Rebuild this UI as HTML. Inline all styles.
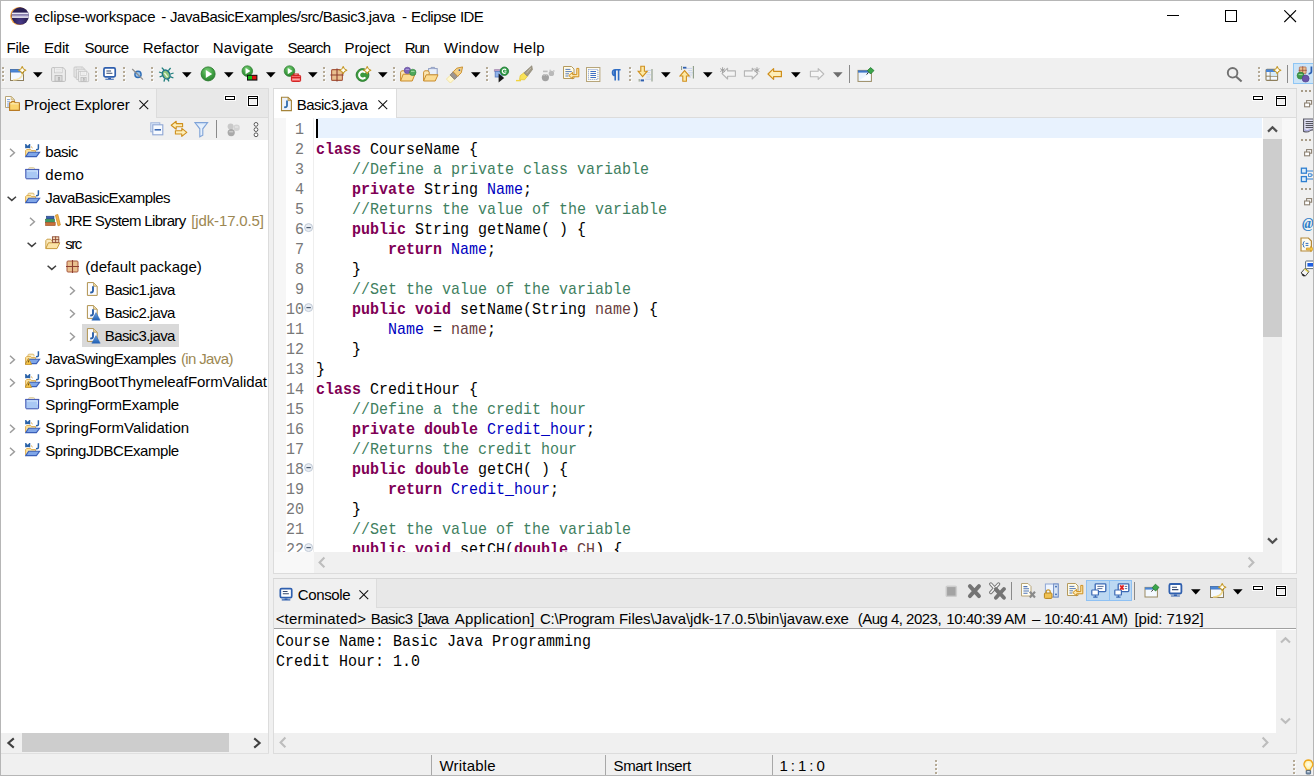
<!DOCTYPE html>
<html><head><meta charset="utf-8"><title>Eclipse IDE</title>
<style>
html,body{margin:0;padding:0;}
body{width:1314px;height:776px;overflow:hidden;background:#f0f0f0;font-family:"Liberation Sans",sans-serif;font-size:15px;color:#000;position:relative;}
.b{position:absolute;display:block;box-sizing:border-box;}
.t{position:absolute;white-space:pre;display:block;}
.m{font-family:"Liberation Mono",monospace;}
.k{color:#7f0055;font-weight:bold;}
.c{color:#3f7f5f;}
.f{color:#0000c0;}
.p{color:#6a3e3e;}
i{font-style:normal;}
.ln{color:#787878;text-align:right;}
.m{font-size:15px;line-height:24px;height:20px;margin-top:1px;transform-origin:0 15px;transform:scaleY(1.06);}
</style></head><body>
<div class="b" style="left:0px;top:0px;width:1314px;height:58px;background:#ffffff;"></div>
<div class="b" style="left:0px;top:0px;width:1314px;height:1px;background:#b6b6b6;"></div>
<div class="b" style="left:0px;top:0px;width:1px;height:776px;background:#b6b6b6;"></div>
<div class="b" style="left:1313px;top:0px;width:1px;height:776px;background:#b6b6b6;"></div>
<div class="b" style="left:0px;top:775px;width:1314px;height:1px;background:#b6b6b6;"></div>
<span class="t" style="left:34.40px;top:6.80px;line-height:20px;letter-spacing:-0.140px;">eclipse-workspace</span>
<span class="t" style="left:161.30px;top:6.80px;line-height:20px;letter-spacing:-0.600px;">-</span>
<span class="t" style="left:170.00px;top:6.80px;line-height:20px;letter-spacing:-0.444px;">JavaBasicExamples/src/Basic3.java</span>
<span class="t" style="left:402.00px;top:6.80px;line-height:20px;letter-spacing:-0.600px;">-</span>
<span class="t" style="left:411.00px;top:6.80px;line-height:20px;letter-spacing:-0.502px;">Eclipse</span>
<span class="t" style="left:460.00px;top:6.80px;line-height:20px;letter-spacing:-0.650px;">IDE</span>
<svg class="b" style="left:1167px;top:8px" width="16" height="16" viewBox="0 0 16 16"><path d="M0 7.5H12" stroke="#000" stroke-width="1"/></svg>
<svg class="b" style="left:1225px;top:10px" width="14" height="14" viewBox="0 0 14 14"><rect x="0.5" y="0.5" width="11" height="11" fill="none" stroke="#000" stroke-width="1"/></svg>
<svg class="b" style="left:1284px;top:10px" width="14" height="14" viewBox="0 0 14 14"><path d="M0.3 0.3L12 12M12 0.3L0.3 12" stroke="#000" stroke-width="1.1"/></svg>
<span class="t" style="left:6.50px;top:37.80px;line-height:20px;letter-spacing:-0.276px;">File</span>
<span class="t" style="left:44.00px;top:37.80px;line-height:20px;letter-spacing:-0.227px;">Edit</span>
<span class="t" style="left:84.50px;top:37.80px;line-height:20px;letter-spacing:-0.597px;">Source</span>
<span class="t" style="left:142.70px;top:37.80px;line-height:20px;letter-spacing:-0.056px;">Refactor</span>
<span class="t" style="left:212.70px;top:37.80px;line-height:20px;letter-spacing:0.206px;">Navigate</span>
<span class="t" style="left:287.50px;top:37.80px;line-height:20px;letter-spacing:-0.797px;">Search</span>
<span class="t" style="left:344.60px;top:37.80px;line-height:20px;letter-spacing:-0.153px;">Project</span>
<span class="t" style="left:404.70px;top:37.80px;line-height:20px;letter-spacing:-1.137px;">Run</span>
<span class="t" style="left:444.00px;top:37.80px;line-height:20px;letter-spacing:0.297px;">Window</span>
<span class="t" style="left:513.00px;top:37.80px;line-height:20px;letter-spacing:0.231px;">Help</span>
<div class="b" style="left:1px;top:88px;width:268px;height:666px;background:#ffffff;"></div>
<div class="b" style="left:1px;top:88px;width:268px;height:52px;background:#f0f0f0;"></div>
<div class="b" style="left:156px;top:88px;width:113px;height:30px;background:#e8e8e8;border-left:1px solid #dcdcdc;border-bottom:1px solid #dcdcdc;border-top:1px solid #dcdcdc;"></div>
<div class="b" style="left:268px;top:88px;width:1px;height:666px;background:#dcdcdc;"></div>
<span class="t" style="left:24.10px;top:94.80px;line-height:20px;letter-spacing:-0.067px;">Project Explorer</span>
<svg class="b" style="left:139px;top:99.8px" width="11" height="11" viewBox="0 0 11 11"><path d="M0.4 0.4L9.2 9.2M9.2 0.4L0.4 9.2" stroke="#111" stroke-width="1.05" fill="none"/></svg>
<div class="b" style="left:225px;top:96px;width:10px;height:4px;background:#ffffff;border:1px solid #000;box-shadow:0 0 0 1px rgba(255,255,255,0.85);"></div>
<div class="b" style="left:248px;top:96px;width:10px;height:10px;background:#f0f0f0;border:1px solid #000;box-shadow:0 0 0 1px rgba(255,255,255,0.85), inset 0 0 0 1px rgba(255,255,255,0.7);"></div>
<div class="b" style="left:249px;top:97px;width:8px;height:1px;background:#ffffff;"></div>
<div class="b" style="left:249px;top:98px;width:8px;height:1px;background:#000000;"></div>
<div class="b" style="left:1px;top:733px;width:267px;height:20px;background:#f0f0f0;"></div>
<div class="b" style="left:22px;top:733px;width:207px;height:19px;background:#cdcdcd;"></div>
<div class="b" style="left:1px;top:753px;width:268px;height:1px;background:#e0e0e0;"></div>
<svg class="b" style="left:5px;top:735.5px" width="12" height="14" viewBox="0 0 12 14"><path d="M8.8 2.4L3.4 7L8.8 11.6" stroke="#404040" stroke-width="2.1" fill="none"/></svg>
<svg class="b" style="left:250.5px;top:735.5px" width="12" height="14" viewBox="0 0 12 14"><path d="M3.2 2.4L8.6 7L3.2 11.6" stroke="#404040" stroke-width="2.1" fill="none"/></svg>
<div class="b" style="left:273px;top:88px;width:1024px;height:486px;background:#ffffff;border:1px solid #dcdcdc;"></div>
<div class="b" style="left:396px;top:89px;width:900px;height:29px;background:#f0f0f0;border-left:1px solid #dcdcdc;border-bottom:1px solid #dcdcdc;"></div>
<span class="t" style="left:296.80px;top:94.80px;line-height:20px;letter-spacing:-0.566px;">Basic3.java</span>
<svg class="b" style="left:378.2px;top:99.8px" width="11" height="11" viewBox="0 0 11 11"><path d="M0.4 0.4L9.2 9.2M9.2 0.4L0.4 9.2" stroke="#111" stroke-width="1.05" fill="none"/></svg>
<div class="b" style="left:1253px;top:96px;width:10px;height:4px;background:#ffffff;border:1px solid #000;box-shadow:0 0 0 1px rgba(255,255,255,0.85);"></div>
<div class="b" style="left:1276px;top:96px;width:10px;height:10px;background:#f0f0f0;border:1px solid #000;box-shadow:0 0 0 1px rgba(255,255,255,0.85), inset 0 0 0 1px rgba(255,255,255,0.7);"></div>
<div class="b" style="left:1277px;top:97px;width:8px;height:1px;background:#ffffff;"></div>
<div class="b" style="left:1277px;top:98px;width:8px;height:1px;background:#000000;"></div>
<div class="b" style="left:273px;top:578px;width:1024px;height:176px;background:#ffffff;border:1px solid #dcdcdc;"></div>
<div class="b" style="left:274px;top:579px;width:1022px;height:50px;background:#f0f0f0;"></div>
<div class="b" style="left:376px;top:579px;width:920px;height:29px;background:#e8e8e8;border-left:1px solid #dcdcdc;border-bottom:1px solid #dcdcdc;"></div>
<span class="t" style="left:297.80px;top:584.80px;line-height:20px;letter-spacing:-0.382px;">Console</span>
<svg class="b" style="left:359px;top:589.8px" width="11" height="11" viewBox="0 0 11 11"><path d="M0.4 0.4L9.2 9.2M9.2 0.4L0.4 9.2" stroke="#111" stroke-width="1.05" fill="none"/></svg>
<div class="b" style="left:1253px;top:586px;width:10px;height:4px;background:#ffffff;border:1px solid #000;box-shadow:0 0 0 1px rgba(255,255,255,0.85);"></div>
<div class="b" style="left:1276px;top:586px;width:10px;height:10px;background:#f0f0f0;border:1px solid #000;box-shadow:0 0 0 1px rgba(255,255,255,0.85), inset 0 0 0 1px rgba(255,255,255,0.7);"></div>
<div class="b" style="left:1277px;top:587px;width:8px;height:1px;background:#ffffff;"></div>
<div class="b" style="left:1277px;top:588px;width:8px;height:1px;background:#000000;"></div>
<div class="b" style="left:431px;top:755px;width:1px;height:20px;background:#a8a8a8;"></div>
<div class="b" style="left:605px;top:755px;width:1px;height:20px;background:#a8a8a8;"></div>
<div class="b" style="left:772px;top:755px;width:1px;height:20px;background:#a8a8a8;"></div>
<span class="t" style="left:439.40px;top:755.80px;line-height:20px;letter-spacing:0.214px;">Writable</span>
<span class="t" style="left:613.60px;top:755.80px;line-height:20px;letter-spacing:-0.384px;">Smart Insert</span>
<span class="t" style="left:779.40px;top:755.80px;line-height:20px;letter-spacing:-0.574px;">1 : 1 : 0</span>
<svg class="b" style="left:9px;top:6px" width="22" height="20" viewBox="0 0 22 20"><defs><clipPath id="ecl"><circle cx="11" cy="10" r="8.8"/></clipPath><radialGradient id="eg" cx="50%" cy="85%" r="70%"><stop offset="0" stop-color="#4a3a8c"/><stop offset="0.6" stop-color="#2c2255"/></radialGradient></defs>
<circle cx="10.2" cy="10" r="9.1" fill="#f4a340"/><circle cx="11.2" cy="10" r="8.7" fill="url(#eg)"/>
<g clip-path="url(#ecl)"><rect x="3" y="6.6" width="18" height="1.7" fill="#e9e6f4"/><rect x="3" y="8.3" width="18" height="1.9" fill="#9a92be"/><rect x="3" y="10.2" width="18" height="1.7" fill="#ece9f6"/></g></svg>
<svg class="b" style="left:4px;top:95px" width="18" height="17" viewBox="0 0 18 17"><path d="M1.5 1.5H7.4L10.4 4.4V12.5H1.5Z" fill="#fdfdfa" stroke="#b8a578" stroke-width="1"/><path d="M7.2 1.6V4.6H10.2" fill="#e8d9a8" stroke="#c8b078" stroke-width="0.8"/><path d="M3 4.6H6.2M3 6.8H6.2M3 9H5.4M3 11H5" stroke="#7f9fd8" stroke-width="1"/>
<path d="M5.6 15.4V7.8H7L7.8 6.4H10.4L11.2 7.8H15.4V15.4Z" fill="#fbd46e" stroke="#b87a24" stroke-width="1.1" stroke-linejoin="round"/><path d="M6.4 8.8H14.6" stroke="#fdf0c0" stroke-width="1"/></svg>
<svg class="b" style="left:280px;top:96px" width="13" height="16" viewBox="0 0 13 16"><path d="M1.5 1.2H8L11.4 4.6V14.6H1.5Z" fill="#eef3fb" stroke="#a5843a" stroke-width="1.1"/><path d="M8 1.4V4.6H11.2Z" fill="#e6c98a" stroke="#a5843a" stroke-width="0.7"/><path d="M7 4.6V9.4Q7 11.6 4.2 11.2" stroke="#2f6cae" stroke-width="1.8" fill="none"/></svg>
<div class="b" style="left:1px;top:88px;width:268px;height:1px;background:#dcdcdc;"></div>
<div class="b" style="left:273px;top:88px;width:1024px;height:1px;background:#d6d6d6;"></div>
<div class="b" style="left:273px;top:578px;width:1024px;height:1px;background:#d6d6d6;"></div>
<div class="b" style="left:2px;top:67px;width:2px;height:2px;background:#b5aa96;box-shadow:1px 1px 0 rgba(255,255,255,0.8);"></div>
<div class="b" style="left:2px;top:71px;width:2px;height:2px;background:#b5aa96;box-shadow:1px 1px 0 rgba(255,255,255,0.8);"></div>
<div class="b" style="left:2px;top:75px;width:2px;height:2px;background:#b5aa96;box-shadow:1px 1px 0 rgba(255,255,255,0.8);"></div>
<div class="b" style="left:2px;top:79px;width:2px;height:2px;background:#b5aa96;box-shadow:1px 1px 0 rgba(255,255,255,0.8);"></div>
<div class="b" style="left:95px;top:67px;width:2px;height:2px;background:#b5aa96;box-shadow:1px 1px 0 rgba(255,255,255,0.8);"></div>
<div class="b" style="left:95px;top:71px;width:2px;height:2px;background:#b5aa96;box-shadow:1px 1px 0 rgba(255,255,255,0.8);"></div>
<div class="b" style="left:95px;top:75px;width:2px;height:2px;background:#b5aa96;box-shadow:1px 1px 0 rgba(255,255,255,0.8);"></div>
<div class="b" style="left:95px;top:79px;width:2px;height:2px;background:#b5aa96;box-shadow:1px 1px 0 rgba(255,255,255,0.8);"></div>
<div class="b" style="left:123px;top:67px;width:2px;height:2px;background:#b5aa96;box-shadow:1px 1px 0 rgba(255,255,255,0.8);"></div>
<div class="b" style="left:123px;top:71px;width:2px;height:2px;background:#b5aa96;box-shadow:1px 1px 0 rgba(255,255,255,0.8);"></div>
<div class="b" style="left:123px;top:75px;width:2px;height:2px;background:#b5aa96;box-shadow:1px 1px 0 rgba(255,255,255,0.8);"></div>
<div class="b" style="left:123px;top:79px;width:2px;height:2px;background:#b5aa96;box-shadow:1px 1px 0 rgba(255,255,255,0.8);"></div>
<div class="b" style="left:151px;top:67px;width:2px;height:2px;background:#b5aa96;box-shadow:1px 1px 0 rgba(255,255,255,0.8);"></div>
<div class="b" style="left:151px;top:71px;width:2px;height:2px;background:#b5aa96;box-shadow:1px 1px 0 rgba(255,255,255,0.8);"></div>
<div class="b" style="left:151px;top:75px;width:2px;height:2px;background:#b5aa96;box-shadow:1px 1px 0 rgba(255,255,255,0.8);"></div>
<div class="b" style="left:151px;top:79px;width:2px;height:2px;background:#b5aa96;box-shadow:1px 1px 0 rgba(255,255,255,0.8);"></div>
<div class="b" style="left:323px;top:67px;width:2px;height:2px;background:#b5aa96;box-shadow:1px 1px 0 rgba(255,255,255,0.8);"></div>
<div class="b" style="left:323px;top:71px;width:2px;height:2px;background:#b5aa96;box-shadow:1px 1px 0 rgba(255,255,255,0.8);"></div>
<div class="b" style="left:323px;top:75px;width:2px;height:2px;background:#b5aa96;box-shadow:1px 1px 0 rgba(255,255,255,0.8);"></div>
<div class="b" style="left:323px;top:79px;width:2px;height:2px;background:#b5aa96;box-shadow:1px 1px 0 rgba(255,255,255,0.8);"></div>
<div class="b" style="left:393px;top:67px;width:2px;height:2px;background:#b5aa96;box-shadow:1px 1px 0 rgba(255,255,255,0.8);"></div>
<div class="b" style="left:393px;top:71px;width:2px;height:2px;background:#b5aa96;box-shadow:1px 1px 0 rgba(255,255,255,0.8);"></div>
<div class="b" style="left:393px;top:75px;width:2px;height:2px;background:#b5aa96;box-shadow:1px 1px 0 rgba(255,255,255,0.8);"></div>
<div class="b" style="left:393px;top:79px;width:2px;height:2px;background:#b5aa96;box-shadow:1px 1px 0 rgba(255,255,255,0.8);"></div>
<div class="b" style="left:486px;top:67px;width:2px;height:2px;background:#b5aa96;box-shadow:1px 1px 0 rgba(255,255,255,0.8);"></div>
<div class="b" style="left:486px;top:71px;width:2px;height:2px;background:#b5aa96;box-shadow:1px 1px 0 rgba(255,255,255,0.8);"></div>
<div class="b" style="left:486px;top:75px;width:2px;height:2px;background:#b5aa96;box-shadow:1px 1px 0 rgba(255,255,255,0.8);"></div>
<div class="b" style="left:486px;top:79px;width:2px;height:2px;background:#b5aa96;box-shadow:1px 1px 0 rgba(255,255,255,0.8);"></div>
<div class="b" style="left:629px;top:67px;width:2px;height:2px;background:#b5aa96;box-shadow:1px 1px 0 rgba(255,255,255,0.8);"></div>
<div class="b" style="left:629px;top:71px;width:2px;height:2px;background:#b5aa96;box-shadow:1px 1px 0 rgba(255,255,255,0.8);"></div>
<div class="b" style="left:629px;top:75px;width:2px;height:2px;background:#b5aa96;box-shadow:1px 1px 0 rgba(255,255,255,0.8);"></div>
<div class="b" style="left:629px;top:79px;width:2px;height:2px;background:#b5aa96;box-shadow:1px 1px 0 rgba(255,255,255,0.8);"></div>
<div class="b" style="left:1258px;top:67px;width:2px;height:2px;background:#b5aa96;box-shadow:1px 1px 0 rgba(255,255,255,0.8);"></div>
<div class="b" style="left:1258px;top:71px;width:2px;height:2px;background:#b5aa96;box-shadow:1px 1px 0 rgba(255,255,255,0.8);"></div>
<div class="b" style="left:1258px;top:75px;width:2px;height:2px;background:#b5aa96;box-shadow:1px 1px 0 rgba(255,255,255,0.8);"></div>
<div class="b" style="left:1258px;top:79px;width:2px;height:2px;background:#b5aa96;box-shadow:1px 1px 0 rgba(255,255,255,0.8);"></div>
<svg class="b" style="left:10px;top:66px" width="16" height="16" viewBox="0 0 16 16"><rect x="0.5" y="3.5" width="13" height="11" fill="#f4f9ff" stroke="#8e7f5c"/>
<rect x="0.5" y="3.5" width="13" height="2.6" fill="#4a86d6" stroke="#3a6fbd" stroke-width="0.6"/>
<path d="M3 14C9 14 12 11 13 7" stroke="#f5e4ae" stroke-width="1.5" fill="none"/></svg>
<svg class="b" style="left:18px;top:66px" width="9" height="9" viewBox="0 0 9 9"><g transform="translate(0.2,0.2)"><path d="M4 0.4L5.2 2.8L7.6 4L5.2 5.2L4 7.6L2.8 5.2L0.4 4L2.8 2.8Z" fill="#fbe7a6" stroke="#c59a2c" stroke-width="1.1" stroke-linejoin="round"/><path d="M4 2.2V5.8M2.2 4H5.8" stroke="#ffffff" stroke-width="1.2"/></g></svg>
<svg class="b" style="left:33px;top:72px" width="10" height="6" viewBox="0 0 10 6"><path d="M0 0.2H9.6L4.8 5.4Z" fill="#000"/></svg>
<svg class="b" style="left:51px;top:67px" width="16" height="16" viewBox="0 0 16 16"><path d="M1.6 0.6H12L14.4 2.8V13.4Q14.4 14.4 13.4 14.4H1.6Q0.6 14.4 0.6 13.4V1.6Q0.6 0.6 1.6 0.6Z" fill="#ececec" stroke="#bdbdbd"/><rect x="3.4" y="0.8" width="7.8" height="5" fill="#f6f6f6" stroke="#c8c8c8" stroke-width="0.8"/><path d="M4.6 2.6H10M4.6 4.2H10" stroke="#dadada" stroke-width="0.7"/><rect x="4" y="8.6" width="7" height="5.6" fill="#dedede" stroke="#b6b6b6" stroke-width="0.9"/><rect x="7.2" y="10.2" width="1.6" height="3" fill="#c4c4c4" stroke="#aaaaaa" stroke-width="0.5"/></svg>
<svg class="b" style="left:73px;top:66px" width="17" height="17" viewBox="0 0 17 17"><g transform="translate(0.6,0.6) scale(0.74)"><path d="M1.6 0.6H12L14.4 2.8V13.4Q14.4 14.4 13.4 14.4H1.6Q0.6 14.4 0.6 13.4V1.6Q0.6 0.6 1.6 0.6Z" fill="#ececec" stroke="#bdbdbd"/><rect x="3.4" y="0.8" width="7.8" height="5" fill="#f6f6f6" stroke="#c8c8c8" stroke-width="0.8"/><path d="M4.6 2.6H10M4.6 4.2H10" stroke="#dadada" stroke-width="0.7"/><rect x="4" y="8.6" width="7" height="5.6" fill="#dedede" stroke="#b6b6b6" stroke-width="0.9"/><rect x="7.2" y="10.2" width="1.6" height="3" fill="#c4c4c4" stroke="#aaaaaa" stroke-width="0.5"/></g><g transform="translate(2.8,2.8) scale(0.74)"><path d="M1.6 0.6H12L14.4 2.8V13.4Q14.4 14.4 13.4 14.4H1.6Q0.6 14.4 0.6 13.4V1.6Q0.6 0.6 1.6 0.6Z" fill="#ececec" stroke="#bdbdbd"/><rect x="3.4" y="0.8" width="7.8" height="5" fill="#f6f6f6" stroke="#c8c8c8" stroke-width="0.8"/><path d="M4.6 2.6H10M4.6 4.2H10" stroke="#dadada" stroke-width="0.7"/><rect x="4" y="8.6" width="7" height="5.6" fill="#dedede" stroke="#b6b6b6" stroke-width="0.9"/><rect x="7.2" y="10.2" width="1.6" height="3" fill="#c4c4c4" stroke="#aaaaaa" stroke-width="0.5"/></g><g transform="translate(5,5) scale(0.74)"><path d="M1.6 0.6H12L14.4 2.8V13.4Q14.4 14.4 13.4 14.4H1.6Q0.6 14.4 0.6 13.4V1.6Q0.6 0.6 1.6 0.6Z" fill="#ececec" stroke="#bdbdbd"/><rect x="3.4" y="0.8" width="7.8" height="5" fill="#f6f6f6" stroke="#c8c8c8" stroke-width="0.8"/><path d="M4.6 2.6H10M4.6 4.2H10" stroke="#dadada" stroke-width="0.7"/><rect x="4" y="8.6" width="7" height="5.6" fill="#dedede" stroke="#b6b6b6" stroke-width="0.9"/><rect x="7.2" y="10.2" width="1.6" height="3" fill="#c4c4c4" stroke="#aaaaaa" stroke-width="0.5"/></g></svg>
<svg class="b" style="left:103px;top:67px" width="15" height="15" viewBox="0 0 15 15"><g transform="scale(0.94)"><rect x="1" y="1" width="12" height="9.5" rx="1.4" fill="#ffffff" stroke="#2f5fae" stroke-width="1.8"/><path d="M3.6 4.2H8.6M3.6 6.6H10" stroke="#33476e" stroke-width="1.1"/><path d="M5.5 11.4H8.5V12.4H11.5V13.6H2.5V12.4H5.5Z" fill="#2f5fae"/></g></svg>
<svg class="b" style="left:130px;top:66px" width="16" height="16" viewBox="0 0 16 16"><circle cx="8" cy="8.4" r="3.1" fill="#9cc4ea" stroke="#2e6db6" stroke-width="1.4"/><path d="M2.2 3L13 13.6" stroke="#8d8d8d" stroke-width="1.2"/></svg>
<svg class="b" style="left:158px;top:66px" width="17" height="17" viewBox="0 0 17 17"><g stroke="#1f7f7c" stroke-width="1.3" fill="none"><path d="M6 4L3.8 1.6M10.4 4.6L12.6 2M4.2 7L1 6M4.6 9.6L1.6 11M12.4 8L15.6 7M12.2 10.6L15.4 12M6.6 13L6 15.6M9.6 13.2L11 15.4"/></g>
<ellipse cx="8.2" cy="8.6" rx="3.5" ry="4.7" transform="rotate(-28 8.2 8.6)" fill="#8fc47a" stroke="#1f7486" stroke-width="1.5"/>
<path d="M6.4 7L9.6 11" stroke="#e8f6df" stroke-width="1.3"/></svg>
<svg class="b" style="left:182px;top:72px" width="10" height="6" viewBox="0 0 10 6"><path d="M0 0.2H9.6L4.8 5.4Z" fill="#000"/></svg>
<svg class="b" style="left:200px;top:66px" width="16" height="16" viewBox="0 0 16 16"><g transform="translate(0.6,0.4)"><defs><radialGradient id="rg" cx="45%" cy="30%" r="75%"><stop offset="0" stop-color="#7ccf7a"/><stop offset="0.55" stop-color="#3fa142"/><stop offset="1" stop-color="#2a7d2f"/></radialGradient></defs><circle cx="7.5" cy="7.5" r="7" fill="url(#rg)" stroke="#2a7a2e" stroke-width="0.9"/><path d="M5.2 3.5L11.6 7.5L5.2 11.5Z" fill="#ffffff"/></g></svg>
<svg class="b" style="left:224px;top:72px" width="10" height="6" viewBox="0 0 10 6"><path d="M0 0.2H9.6L4.8 5.4Z" fill="#000"/></svg>
<svg class="b" style="left:241px;top:65px" width="18" height="18" viewBox="0 0 18 18"><g transform="translate(0.6,0.4) scale(0.76)"><defs><radialGradient id="rg" cx="45%" cy="30%" r="75%"><stop offset="0" stop-color="#7ccf7a"/><stop offset="0.55" stop-color="#3fa142"/><stop offset="1" stop-color="#2a7d2f"/></radialGradient></defs><circle cx="7.5" cy="7.5" r="7" fill="url(#rg)" stroke="#2a7a2e" stroke-width="0.9"/><path d="M5.2 3.5L11.6 7.5L5.2 11.5Z" fill="#ffffff"/></g><rect x="6" y="9.8" width="10.4" height="5.8" fill="#111"/><rect x="7" y="10.8" width="4" height="3.6" fill="#16c016"/><rect x="11.2" y="10.8" width="4.2" height="3.6" fill="#e01010"/></svg>
<svg class="b" style="left:266px;top:72px" width="10" height="6" viewBox="0 0 10 6"><path d="M0 0.2H9.6L4.8 5.4Z" fill="#000"/></svg>
<svg class="b" style="left:283px;top:65px" width="19" height="18" viewBox="0 0 19 18"><g transform="translate(0.8,0.4) scale(0.76)"><defs><radialGradient id="rg" cx="45%" cy="30%" r="75%"><stop offset="0" stop-color="#7ccf7a"/><stop offset="0.55" stop-color="#3fa142"/><stop offset="1" stop-color="#2a7d2f"/></radialGradient></defs><circle cx="7.5" cy="7.5" r="7" fill="url(#rg)" stroke="#2a7a2e" stroke-width="0.9"/><path d="M5.2 3.5L11.6 7.5L5.2 11.5Z" fill="#ffffff"/></g><path d="M10.8 10.6V9H15.2V10.6" stroke="#d01818" stroke-width="1.2" fill="none"/><rect x="8.4" y="10.4" width="9.2" height="6" rx="0.9" fill="#f46a6a" stroke="#d01818" stroke-width="1"/><path d="M8.6 12.6H17.4" stroke="#c81414" stroke-width="0.9"/><path d="M9.4 14.4H16.6" stroke="#fbb8b8" stroke-width="0.9"/></svg>
<svg class="b" style="left:308px;top:72px" width="10" height="6" viewBox="0 0 10 6"><path d="M0 0.2H9.6L4.8 5.4Z" fill="#000"/></svg>
<svg class="b" style="left:330px;top:68px" width="14" height="14" viewBox="0 0 14 14"><g transform="translate(1,1)"><rect x="0.6" y="0.6" width="10.8" height="10.8" rx="1" fill="#e9c08f" stroke="#a8593f" stroke-width="1.1"/><path d="M6 -0.6V12.6M-0.6 6H12.6" stroke="#8e3f2f" stroke-width="1.1"/></g></svg>
<svg class="b" style="left:339px;top:66px" width="9" height="9" viewBox="0 0 9 9"><g transform="translate(0.2,0.2)"><path d="M4 0.4L5.2 2.8L7.6 4L5.2 5.2L4 7.6L2.8 5.2L0.4 4L2.8 2.8Z" fill="#fbe7a6" stroke="#c59a2c" stroke-width="1.1" stroke-linejoin="round"/><path d="M4 2.2V5.8M2.2 4H5.8" stroke="#ffffff" stroke-width="1.2"/></g></svg>
<svg class="b" style="left:355px;top:67px" width="16" height="16" viewBox="0 0 16 16"><circle cx="7.5" cy="8" r="6.4" fill="#3c9a3f" stroke="#2a7a2e" stroke-width="0.9"/><path d="M10.4 5.6A3.6 3.6 0 1 0 10.4 10.4" stroke="#fff" stroke-width="2.1" fill="none"/></svg>
<svg class="b" style="left:363px;top:66px" width="9" height="9" viewBox="0 0 9 9"><g transform="translate(0.2,0.2)"><path d="M4 0.4L5.2 2.8L7.6 4L5.2 5.2L4 7.6L2.8 5.2L0.4 4L2.8 2.8Z" fill="#fbe7a6" stroke="#c59a2c" stroke-width="1.1" stroke-linejoin="round"/><path d="M4 2.2V5.8M2.2 4H5.8" stroke="#ffffff" stroke-width="1.2"/></g></svg>
<svg class="b" style="left:378px;top:72px" width="10" height="6" viewBox="0 0 10 6"><path d="M0 0.2H9.6L4.8 5.4Z" fill="#000"/></svg>
<svg class="b" style="left:400px;top:66px" width="18" height="17" viewBox="0 0 18 17"><g transform="translate(0,3.6)"><path d="M0.6 11.4V2.6L1.6 1.2H5.2L6.2 2.6H12V4.4" fill="#fbe7b4" stroke="#c98c2c" stroke-width="1"/><path d="M0.6 11.4L3.2 4.6H15L12.2 11.4Z" fill="#fbdc94" stroke="#c98c2c" stroke-width="1"/></g><circle cx="7.4" cy="4.4" r="3.2" fill="#7a62b8" stroke="#5a4596" stroke-width="0.6"/><circle cx="12.8" cy="6.4" r="3.2" fill="#4fa85a" stroke="#2f8040" stroke-width="0.6"/><path d="M5.6 3.4H9.2" stroke="#b5a6e0" stroke-width="0.9"/><path d="M11 5.4H14.6" stroke="#a7dcae" stroke-width="0.9"/></svg>
<svg class="b" style="left:423px;top:66px" width="18" height="17" viewBox="0 0 18 17"><rect x="5.6" y="2.6" width="8.6" height="6.4" fill="#e9f0fb" stroke="#8e9cc0" stroke-width="1"/><path d="M8 2.4V1.4H11.6V2.4" stroke="#8e9cc0" fill="#b8c4e0" stroke-width="0.9"/><g transform="translate(0,3.6)"><path d="M0.6 11.4V2.6L1.6 1.2H5.2L6.2 2.6V4.4" fill="#fbe7b4" stroke="#c98c2c" stroke-width="1"/><path d="M0.6 11.4L3.2 5.2H15L12.2 11.4Z" fill="#fbdc94" stroke="#c98c2c" stroke-width="1"/></g></svg>
<svg class="b" style="left:446px;top:65px" width="19" height="18" viewBox="0 0 19 18"><g transform="rotate(-45 9.5 9)"><path d="M-0.5 6.2H5V11.8H-0.5Z" fill="#fff8d0" stroke="#f1df9a" stroke-width="0.8"/><rect x="5" y="5.8" width="4.4" height="6.4" fill="#9c9590" stroke="#7d746c" stroke-width="0.7"/><path d="M9.4 5.8H14.5L19.5 9L14.5 12.2H9.4Z" fill="#f3cf86" stroke="#c9902e" stroke-width="0.9"/><circle cx="15" cy="9" r="0.9" fill="#355e9e"/></g></svg>
<svg class="b" style="left:471px;top:72px" width="10" height="6" viewBox="0 0 10 6"><path d="M0 0.2H9.6L4.8 5.4Z" fill="#000"/></svg>
<svg class="b" style="left:493px;top:66px" width="18" height="17" viewBox="0 0 18 17"><path d="M1.4 3.6H9.6V5.4H1.4Z" fill="#c9a7c9" stroke="#9a7aa6" stroke-width="0.7"/><rect x="2.2" y="5.4" width="6.8" height="5.6" fill="#8fb2ea" stroke="#5d7fc4" stroke-width="0.9"/>
<circle cx="11.4" cy="5.2" r="4.2" fill="#2f9a45" stroke="#1f7a32" stroke-width="0.8"/><path d="M13.1 3.9A2.1 2.1 0 1 0 13.1 6.5" stroke="#fff" stroke-width="1.2" fill="none"/><path d="M11.4 5.2H13.6" stroke="#fff" stroke-width="0.9"/>
<path d="M5.6 7.6L11.2 12L5.6 16.4Z" fill="#1a1a1a"/></svg>
<svg class="b" style="left:515px;top:65px" width="19" height="18" viewBox="0 0 19 18"><path d="M1 15.6H6" stroke="#f2d33c" stroke-width="1.4"/><path d="M4.6 14.6L5.2 10.6L9 7.8L12.4 11.2L9.6 14.8Z" fill="#f8e25a" stroke="#e8c830" stroke-width="0.8"/><path d="M9 7.8L16.8 0.8L17.4 4.6L12.4 11.2Z" fill="#9f9886" stroke="#8a836f" stroke-width="0.7"/><path d="M11.6 8.2L16 2.8" stroke="#c5bfae" stroke-width="1"/></svg>
<svg class="b" style="left:541px;top:69px" width="15" height="14" viewBox="0 0 15 14"><circle cx="4.4" cy="8.6" r="3.6" fill="#a2a2a2"/><circle cx="10.4" cy="4.4" r="2.7" fill="#b9b9b9"/><path d="M2 2.4H6.6" stroke="#bdbdbd" stroke-width="1.6"/><circle cx="9.2" cy="1.4" r="0.9" fill="#c9c9c9"/><circle cx="12.8" cy="2" r="0.9" fill="#c9c9c9"/><path d="M2.6 6.4A2.6 2.6 0 0 1 6.2 6.4" stroke="#d9d9d9" stroke-width="0.9" fill="none"/></svg>
<svg class="b" style="left:562px;top:65px" width="18" height="17" viewBox="0 0 18 17"><path d="M1.5 1.5H9.5L12 4V13.5H1.5Z" fill="#fffbe8" stroke="#b49a5e" stroke-width="1"/><path d="M3.4 4.4H8.4M3.4 6.6H9.8M3.4 8.8H7M3.4 11H6.4" stroke="#5b7db8" stroke-width="1"/>
<path d="M14.8 3.4V9.6H10.6V7.4L6.8 10.6L10.6 13.8V11.8H16.8V3.4Z" fill="#fde9b0" stroke="#cf8f1c" stroke-width="1"/></svg>
<svg class="b" style="left:586px;top:67px" width="15" height="15" viewBox="0 0 15 15"><rect x="0.5" y="0.5" width="13.4" height="14" fill="#fdfcf4" stroke="#b7a57a" stroke-width="1"/><rect x="2.5" y="2.5" width="9.4" height="10" fill="none" stroke="#6f8cc8" stroke-width="0.9" stroke-dasharray="1 1"/><path d="M4.4 4.5H10M4.4 6.5H10M4.4 8.5H10M4.4 10.5H10" stroke="#3f6fc4" stroke-width="1"/></svg>
<svg class="b" style="left:610px;top:69px" width="12" height="13" viewBox="0 0 12 13"><path d="M5.4 0.8H10.6M5.4 0.8A2.9 2.9 0 0 0 5.4 6.6M5.2 0.8V11.4M8.6 0.8V11.4" stroke="#2f6dc4" stroke-width="1.6" fill="none"/><path d="M5.2 1.2A2.6 2.6 0 0 0 5.2 6.2Z" fill="#2f6dc4"/></svg>
<svg class="b" style="left:637px;top:65px" width="17" height="18" viewBox="0 0 17 18"><path d="M9.4 5.4H14M9.4 7.6H13M9.4 9.8H14M9.4 12H13M8 14.2H14" stroke="#c7d3ea" stroke-width="1"/><path d="M15 4V16.6" stroke="#8c9a86" stroke-width="1.1"/><path d="M2.2 14V16.6" stroke="#8c9a86" stroke-width="1"/><rect x="3.6" y="14.4" width="3.4" height="2" fill="#2f5fae"/>
<path d="M3.8 1.2H7.4V6.2H10.2L5.6 11.6L1 6.2H3.8Z" fill="#fde9a6" stroke="#cf8f1c" stroke-width="1.1"/></svg>
<svg class="b" style="left:661px;top:72px" width="10" height="6" viewBox="0 0 10 6"><path d="M0 0.2H9.6L4.8 5.4Z" fill="#000"/></svg>
<svg class="b" style="left:679px;top:65px" width="17" height="18" viewBox="0 0 17 18"><path d="M7 3.4H13M9.4 5.6H13M9.4 7.8H14M9.4 10H13M9.4 12.2H12" stroke="#c7d3ea" stroke-width="1"/><path d="M14.4 1V13.6" stroke="#8c9a86" stroke-width="1.1"/><path d="M2.6 1V5" stroke="#8c9a86" stroke-width="1"/><rect x="4" y="1.8" width="3.4" height="1.8" fill="#2f5fae"/>
<path d="M3.8 16.2H7.4V11H10.2L5.6 5.6L1 11H3.8Z" fill="#fde9a6" stroke="#cf8f1c" stroke-width="1.1"/></svg>
<svg class="b" style="left:703px;top:72px" width="10" height="6" viewBox="0 0 10 6"><path d="M0 0.2H9.6L4.8 5.4Z" fill="#000"/></svg>
<svg class="b" style="left:719px;top:66px" width="18" height="16" viewBox="0 0 18 16"><g transform="translate(2.2,1.6)"><path d="M6.4 0.6L0.8 6L6.4 11.4V8.7H14.2V3.3H6.4Z" stroke-linejoin="round" fill="#f4f4f4" stroke="#b4b4b4" stroke-width="1.1"/></g><path d="M3.6 1.2V7M1.2 2.6L6 5.6M6 2.6L1.2 5.6" stroke="#9a9a9a" stroke-width="0.9"/></svg>
<svg class="b" style="left:742px;top:66px" width="19" height="16" viewBox="0 0 19 16"><g transform="translate(16.6,1.6) scale(-1,1)"><path d="M6.4 0.6L0.8 6L6.4 11.4V8.7H14.2V3.3H6.4Z" stroke-linejoin="round" fill="#f4f4f4" stroke="#b4b4b4" stroke-width="1.1"/></g><path d="M15 1.2V7M12.6 2.6L17.4 5.6M17.4 2.6L12.6 5.6" stroke="#9a9a9a" stroke-width="0.9"/></svg>
<svg class="b" style="left:767px;top:67px" width="17" height="14" viewBox="0 0 17 14"><g transform="translate(0.2,1)"><path d="M6.4 0.6L0.8 6L6.4 11.4V8.7H14.2V3.3H6.4Z" stroke-linejoin="round" fill="#fdeeb8" stroke="#cf8f1c" stroke-width="1.2"/></g></svg>
<svg class="b" style="left:791px;top:72px" width="10" height="6" viewBox="0 0 10 6"><path d="M0 0.2H9.6L4.8 5.4Z" fill="#000"/></svg>
<svg class="b" style="left:809px;top:67px" width="17" height="14" viewBox="0 0 17 14"><g transform="translate(15.6,1) scale(-1,1)"><path d="M6.4 0.6L0.8 6L6.4 11.4V8.7H14.2V3.3H6.4Z" stroke-linejoin="round" fill="#f6f6f6" stroke="#b9b9b9" stroke-width="1.1"/></g></svg>
<svg class="b" style="left:833px;top:72px" width="10" height="6" viewBox="0 0 10 6"><path d="M0 0.2H9.6L4.8 5.4Z" fill="#6d6d6d"/></svg>
<div class="b" style="left:849px;top:65px;width:1px;height:18px;background:#8a8a8a;"></div>
<svg class="b" style="left:857px;top:67px" width="18" height="16" viewBox="0 0 18 16"><rect x="1" y="3.4" width="13.4" height="11" fill="#eaf4ff" stroke="#9a8a62" stroke-width="1"/><rect x="1" y="3.4" width="13.4" height="2.2" fill="#3f78c8"/><path d="M2 13.6L13.4 6V13.6Z" fill="#ffffff" opacity="0.8"/>
<path d="M9.6 7.6L11.4 5.4" stroke="#333" stroke-width="1"/><path d="M10.4 3.6L13.6 0.6L17 3.6L13.6 7Z" fill="#3aa64a" stroke="#22782e" stroke-width="0.8"/></svg>
<svg class="b" style="left:1225px;top:66px" width="19" height="18" viewBox="0 0 19 18"><circle cx="7.6" cy="6.8" r="4.8" fill="none" stroke="#707070" stroke-width="1.9"/><path d="M11 10.4L16.6 15.6" stroke="#707070" stroke-width="2.1"/></svg>
<svg class="b" style="left:1265px;top:66px" width="17" height="16" viewBox="0 0 17 16"><rect x="1" y="3.4" width="11.6" height="11" rx="1" fill="#f3f9ff" stroke="#8e7f5c" stroke-width="1.1"/><rect x="1" y="3.4" width="11.6" height="2.6" fill="#4a86d6"/><path d="M5.2 6V14.4M1 10.2H12.6" stroke="#8e7f5c" stroke-width="1"/><rect x="5.8" y="6.2" width="6.4" height="3.6" fill="#d4ebfb"/></svg>
<svg class="b" style="left:1273px;top:66px" width="9" height="9" viewBox="0 0 9 9"><g transform="translate(0.2,0.2)"><path d="M4 0.4L5.2 2.8L7.6 4L5.2 5.2L4 7.6L2.8 5.2L0.4 4L2.8 2.8Z" fill="#fbe7a6" stroke="#c59a2c" stroke-width="1.1" stroke-linejoin="round"/><path d="M4 2.2V5.8M2.2 4H5.8" stroke="#ffffff" stroke-width="1.2"/></g></svg>
<div class="b" style="left:1287px;top:65px;width:1px;height:18px;background:#8a8a8a;"></div>
<div class="b" style="left:1293px;top:63px;width:20px;height:21px;background:#cce4f7;border:1px solid #8fc6f5;border-right:none;"></div>
<svg class="b" style="left:1296px;top:65px" width="17" height="18" viewBox="0 0 17 18"><g transform="translate(3,1.6) scale(0.62)"><rect x="0.6" y="0.6" width="10.8" height="10.8" rx="1" fill="#e9c08f" stroke="#a8593f" stroke-width="1.1"/><path d="M6 -0.6V12.6M-0.6 6H12.6" stroke="#8e3f2f" stroke-width="1.1"/></g><path d="M15.4 1.4V6.6Q15.4 8.8 12.6 8.8" stroke="#2f62b4" stroke-width="1.7" fill="none"/><circle cx="4.6" cy="10.6" r="3.5" fill="#3f9a4a" stroke="#2a7a35" stroke-width="0.6"/><path d="M2.6 9.6H6.6" stroke="#9fd8a6" stroke-width="1"/><circle cx="9.6" cy="13.6" r="3.5" fill="#6a54a8" stroke="#4a3a86" stroke-width="0.6"/></svg>
<svg class="b" style="left:150px;top:122px" width="16" height="16" viewBox="0 0 16 16"><rect x="0.8" y="0.8" width="9" height="9" fill="#dfeafb" stroke="#9fb4da" stroke-width="1"/><rect x="2.8" y="2.8" width="10" height="10" fill="#f7faff" stroke="#8ea6d4" stroke-width="1.1"/><path d="M4.6 7.8H11" stroke="#2f5fae" stroke-width="1.5"/></svg>
<svg class="b" style="left:170px;top:120px" width="18" height="18" viewBox="0 0 18 18"><path d="M6.2 1.2L1.2 5.2L6.2 9.2V6.8H12.6V3.6H6.2Z" fill="#fdeeb8" stroke="#cf8f1c" stroke-width="1.1" stroke-linejoin="round"/><path d="M11.8 8.4L16.8 12.4L11.8 16.4V14H5.4V10.8H11.8Z" fill="#fdeeb8" stroke="#cf8f1c" stroke-width="1.1" stroke-linejoin="round"/></svg>
<svg class="b" style="left:194px;top:121px" width="16" height="18" viewBox="0 0 16 18"><path d="M1 1.6H13.6L8.8 7.8V14.2L5.8 15.8V7.8Z" fill="#e6f0fc" stroke="#7fa3d8" stroke-width="1.1"/><path d="M2.6 2.6H12" stroke="#c3d8f3" stroke-width="1.2"/></svg>
<div class="b" style="left:216px;top:120px;width:1px;height:18px;background:#8a8a8a;"></div>
<svg class="b" style="left:226px;top:123px" width="16" height="14" viewBox="0 0 16 14"><circle cx="4.6" cy="3.6" r="3" fill="#c9c9c9"/><circle cx="10.6" cy="4.8" r="3.2" fill="#d4d4d4"/><circle cx="5.2" cy="9.6" r="3.6" fill="#a9a9a9"/><path d="M3.2 8.8H7.2" stroke="#d9d9d9" stroke-width="1"/><path d="M9 4H12.2" stroke="#ececec" stroke-width="1"/></svg>
<svg class="b" style="left:251px;top:121px" width="10" height="18" viewBox="0 0 10 18"><circle cx="5" cy="3.4" r="1.9" fill="#fff" stroke="#4a4a4a" stroke-width="0.9"/><circle cx="5" cy="8.6" r="1.9" fill="#fff" stroke="#4a4a4a" stroke-width="0.9"/><circle cx="5" cy="13.8" r="1.9" fill="#fff" stroke="#4a4a4a" stroke-width="0.9"/></svg>
<div class="b" style="left:82px;top:324px;width:97px;height:23px;background:#d9d9d9;"></div>
<div class="b" style="left:1px;top:140px;width:267px;height:593px;overflow:hidden">
<svg class="b" style="left:7.5px;top:8px" width="7" height="10" viewBox="0 0 7 10"><path d="M1 0.8L5.4 4.8L1 8.8" stroke="#9c9c9c" stroke-width="1.5" fill="none"/></svg>
<svg class="b" style="left:24px;top:3.5px" width="16" height="14" viewBox="0 0 16 14"><path d="M0.6 12.4V6.6L1.8 5.4H5.6L6.6 6.6H10.6V8.2" fill="#fbe3a0" stroke="#d9a441" stroke-width="0.9"/><path d="M0.8 12.6L3.6 8.2H14.6L11.4 12.6Z" fill="#7fa6e8" stroke="#3a5fb8" stroke-width="1.1"/><path d="M13.4 0.2V4.2Q13.4 6 11 5.6" stroke="#2a62a8" stroke-width="1.5" fill="none"/><path d="M0.9 4.2V0.9L2.7 3L4.5 0.9V4.2" stroke="#2a62a8" stroke-width="1.5" fill="none"/><path d="M6 2.6L7.6 4" stroke="#d9a441" stroke-width="1"/></svg>
<span class="t" style="left:44.30px;top:2.10px;line-height:20px;letter-spacing:-0.504px;">basic</span>
<svg class="b" style="left:24px;top:26.5px" width="16" height="14" viewBox="0 0 16 14"><path d="M3.6 2.6V1.8Q3.6 0.6 4.8 0.6H8.4Q9.6 0.6 9.6 1.8V2.6" fill="#fdf1c8" stroke="#d9c9a0" stroke-width="0.9"/><path d="M0.4 2.4H14V3.2H13.6V11Q13.6 11.8 12.8 11.8H1.6Q0.8 11.8 0.8 11V3.2H0.4Z" fill="#a9c8f4" stroke="#3a50b0" stroke-width="1"/><path d="M2 4H12.4V7.4" stroke="#d4e6fb" stroke-width="1" fill="none"/></svg>
<span class="t" style="left:44.30px;top:25.10px;line-height:20px;letter-spacing:0.340px;">demo</span>
<svg class="b" style="left:5.5px;top:55.6px" width="10" height="6" viewBox="0 0 10 6"><path d="M0.6 0.8L4.8 4.4L9 0.8" stroke="#404040" stroke-width="1.5" fill="none"/></svg>
<svg class="b" style="left:24px;top:49.5px" width="16" height="14" viewBox="0 0 16 14"><path d="M3 5.4V4.2Q3 3.2 4 3.2H8Q9 3.2 9 4.2V5.4" fill="#fdf1c8" stroke="#d9b56a" stroke-width="0.9"/><path d="M0.6 12.4V6.6L1.8 5.4H5.6L6.6 6.6H10.6V8.2" fill="#fbe3a0" stroke="#d9a441" stroke-width="0.9"/><path d="M0.8 12.6L3.6 8.2H14.6L11.4 12.6Z" fill="#7fa6e8" stroke="#3a5fb8" stroke-width="1.1"/><path d="M13.4 0.2V4.2Q13.4 6 11 5.6" stroke="#2a62a8" stroke-width="1.5" fill="none"/></svg>
<span class="t" style="left:44.30px;top:48.10px;line-height:20px;letter-spacing:-0.564px;">JavaBasicExamples</span>
<svg class="b" style="left:27.5px;top:77px" width="7" height="10" viewBox="0 0 7 10"><path d="M1 0.8L5.4 4.8L1 8.8" stroke="#9c9c9c" stroke-width="1.5" fill="none"/></svg>
<svg class="b" style="left:44px;top:72.5px" width="16" height="14" viewBox="0 0 16 14"><rect x="1.4" y="3.2" width="7.6" height="2.8" fill="#3a62ae" stroke="#24427e" stroke-width="0.6"/><rect x="0.6" y="6.2" width="9" height="3" fill="#3f9a63" stroke="#2a7a49" stroke-width="0.6"/><rect x="0.6" y="9.4" width="9.6" height="3.2" fill="#c8703a" stroke="#9a4f22" stroke-width="0.6"/><path d="M10.4 2.2L12.8 1.4L15.4 12L13 12.8Z" fill="#f2b04a" stroke="#c8861c" stroke-width="0.7"/></svg>
<span class="t" style="left:64.00px;top:71.10px;line-height:20px;letter-spacing:-0.667px;">JRE System Library</span>
<span class="t" style="left:190.30px;top:71.10px;line-height:20px;letter-spacing:-0.140px;color:#9c8752;">[jdk-17.0.5]</span>
<svg class="b" style="left:25.5px;top:101.6px" width="10" height="6" viewBox="0 0 10 6"><path d="M0.6 0.8L4.8 4.4L9 0.8" stroke="#404040" stroke-width="1.5" fill="none"/></svg>
<svg class="b" style="left:44px;top:95.5px" width="16" height="14" viewBox="0 0 16 14"><path d="M0.8 12.4V4.6L2 3.2H5.6L6.6 4.6H8" fill="#fbe9bc" stroke="#c79a3c" stroke-width="0.9"/><path d="M0.8 12.6L3.4 6.8H14.8L12 12.6Z" fill="#fbe3a6" stroke="#c79a3c" stroke-width="1"/><rect x="7.4" y="0.8" width="6.4" height="5.6" fill="#f3d9b8" stroke="#8e4a32" stroke-width="0.9"/><path d="M10.6 0.4V6.8M7 3.6H14.2" stroke="#8e4a32" stroke-width="0.9"/></svg>
<span class="t" style="left:64.30px;top:94.10px;line-height:20px;letter-spacing:-1.498px;">src</span>
<svg class="b" style="left:45.5px;top:124.6px" width="10" height="6" viewBox="0 0 10 6"><path d="M0.6 0.8L4.8 4.4L9 0.8" stroke="#404040" stroke-width="1.5" fill="none"/></svg>
<svg class="b" style="left:65px;top:120px" width="14" height="14" viewBox="0 0 14 14"><rect x="1" y="1" width="11" height="11" rx="1" fill="#e9c08f" stroke="#a8593f" stroke-width="1"/><path d="M6.5 0V13M0 6.5H13" stroke="#8e3f2f" stroke-width="1.1"/></svg>
<span class="t" style="left:84.30px;top:117.10px;line-height:20px;letter-spacing:0.037px;">(default package)</span>
<svg class="b" style="left:67.5px;top:146px" width="7" height="10" viewBox="0 0 7 10"><path d="M1 0.8L5.4 4.8L1 8.8" stroke="#9c9c9c" stroke-width="1.5" fill="none"/></svg>
<svg class="b" style="left:85.4px;top:142.3px" width="13" height="16" viewBox="0 0 13 16"><path d="M1.4 0.6H7.6L11.2 4.2V13.4H1.4Z" fill="#fbfcff" stroke="#b0924e" stroke-width="1"/><path d="M7.6 0.8V4.2H11" fill="#f0dfae" stroke="#b0924e" stroke-width="0.8"/><path d="M7 4.2V8.6Q7 10.8 4.2 10.4" stroke="#2a5fa8" stroke-width="1.9" fill="none"/></svg>
<span class="t" style="left:103.80px;top:140.10px;line-height:20px;letter-spacing:-0.606px;">Basic1.java</span>
<svg class="b" style="left:67.5px;top:169px" width="7" height="10" viewBox="0 0 7 10"><path d="M1 0.8L5.4 4.8L1 8.8" stroke="#9c9c9c" stroke-width="1.5" fill="none"/></svg>
<svg class="b" style="left:85.4px;top:165.3px" width="16" height="17" viewBox="0 0 16 17"><path d="M1.4 0.6H7.6L11.2 4.2V13.4H1.4Z" fill="#fbfcff" stroke="#b0924e" stroke-width="1"/><path d="M7.6 0.8V4.2H11" fill="#f0dfae" stroke="#b0924e" stroke-width="0.8"/><path d="M7 4.2V8.6Q7 10.8 4.2 10.4" stroke="#2a5fa8" stroke-width="1.9" fill="none"/><defs><linearGradient id="tg" x1="0" y1="0" x2="0" y2="1"><stop offset="0" stop-color="#6fa4e0"/><stop offset="1" stop-color="#1f5fb4"/></linearGradient></defs><path d="M10 7.6L14.2 15.2H5.8Z" fill="url(#tg)" stroke="#2a66b8" stroke-width="0.5"/></svg>
<span class="t" style="left:103.80px;top:163.10px;line-height:20px;letter-spacing:-0.606px;">Basic2.java</span>
<svg class="b" style="left:67.5px;top:192px" width="7" height="10" viewBox="0 0 7 10"><path d="M1 0.8L5.4 4.8L1 8.8" stroke="#9c9c9c" stroke-width="1.5" fill="none"/></svg>
<svg class="b" style="left:85.4px;top:188.3px" width="16" height="17" viewBox="0 0 16 17"><path d="M1.4 0.6H7.6L11.2 4.2V13.4H1.4Z" fill="#fbfcff" stroke="#b0924e" stroke-width="1"/><path d="M7.6 0.8V4.2H11" fill="#f0dfae" stroke="#b0924e" stroke-width="0.8"/><path d="M7 4.2V8.6Q7 10.8 4.2 10.4" stroke="#2a5fa8" stroke-width="1.9" fill="none"/><defs><linearGradient id="tg" x1="0" y1="0" x2="0" y2="1"><stop offset="0" stop-color="#6fa4e0"/><stop offset="1" stop-color="#1f5fb4"/></linearGradient></defs><path d="M10 7.6L14.2 15.2H5.8Z" fill="url(#tg)" stroke="#2a66b8" stroke-width="0.5"/></svg>
<span class="t" style="left:103.80px;top:186.10px;line-height:20px;letter-spacing:-0.606px;">Basic3.java</span>
<svg class="b" style="left:7.5px;top:215px" width="7" height="10" viewBox="0 0 7 10"><path d="M1 0.8L5.4 4.8L1 8.8" stroke="#9c9c9c" stroke-width="1.5" fill="none"/></svg>
<svg class="b" style="left:24px;top:210.5px" width="16" height="14" viewBox="0 0 16 14"><path d="M3 5.4V4.2Q3 3.2 4 3.2H8Q9 3.2 9 4.2V5.4" fill="#fdf1c8" stroke="#d9b56a" stroke-width="0.9"/><path d="M0.6 12.4V6.6L1.8 5.4H5.6L6.6 6.6H10.6V8.2" fill="#fbe3a0" stroke="#d9a441" stroke-width="0.9"/><path d="M0.8 12.6L3.6 8.2H14.6L11.4 12.6Z" fill="#7fa6e8" stroke="#3a5fb8" stroke-width="1.1"/><path d="M13.4 0.2V4.2Q13.4 6 11 5.6" stroke="#2a62a8" stroke-width="1.5" fill="none"/></svg>
<svg class="b" style="left:23.5px;top:217.5px" width="7" height="7" viewBox="0 0 7 7"><path d="M3.4 0.4L6.6 6.4H0.2Z" fill="#f8c84a" stroke="#c8901c" stroke-width="0.8"/><path d="M3.4 2.4V4.4" stroke="#5a3a00" stroke-width="0.9"/></svg>
<span class="t" style="left:44.30px;top:209.10px;line-height:20px;letter-spacing:-0.462px;">JavaSwingExamples</span>
<span class="t" style="left:179.90px;top:209.10px;line-height:20px;letter-spacing:-0.628px;color:#9c8752;">(in Java)</span>
<svg class="b" style="left:7.5px;top:238px" width="7" height="10" viewBox="0 0 7 10"><path d="M1 0.8L5.4 4.8L1 8.8" stroke="#9c9c9c" stroke-width="1.5" fill="none"/></svg>
<svg class="b" style="left:24px;top:233.5px" width="16" height="14" viewBox="0 0 16 14"><path d="M0.6 12.4V6.6L1.8 5.4H5.6L6.6 6.6H10.6V8.2" fill="#fbe3a0" stroke="#d9a441" stroke-width="0.9"/><path d="M0.8 12.6L3.6 8.2H14.6L11.4 12.6Z" fill="#7fa6e8" stroke="#3a5fb8" stroke-width="1.1"/><path d="M13.4 0.2V4.2Q13.4 6 11 5.6" stroke="#2a62a8" stroke-width="1.5" fill="none"/><path d="M0.9 4.2V0.9L2.7 3L4.5 0.9V4.2" stroke="#2a62a8" stroke-width="1.5" fill="none"/><path d="M6 2.6L7.6 4" stroke="#d9a441" stroke-width="1"/></svg>
<svg class="b" style="left:23.5px;top:240.5px" width="7" height="7" viewBox="0 0 7 7"><path d="M3.4 0.4L6.6 6.4H0.2Z" fill="#f8c84a" stroke="#c8901c" stroke-width="0.8"/><path d="M3.4 2.4V4.4" stroke="#5a3a00" stroke-width="0.9"/></svg>
<span class="t" style="left:44.30px;top:232.10px;line-height:20px;letter-spacing:-0.084px;">SpringBootThymeleafFormValidat</span>
<svg class="b" style="left:24px;top:256.5px" width="16" height="14" viewBox="0 0 16 14"><path d="M3.6 2.6V1.8Q3.6 0.6 4.8 0.6H8.4Q9.6 0.6 9.6 1.8V2.6" fill="#fdf1c8" stroke="#d9c9a0" stroke-width="0.9"/><path d="M0.4 2.4H14V3.2H13.6V11Q13.6 11.8 12.8 11.8H1.6Q0.8 11.8 0.8 11V3.2H0.4Z" fill="#a9c8f4" stroke="#3a50b0" stroke-width="1"/><path d="M2 4H12.4V7.4" stroke="#d4e6fb" stroke-width="1" fill="none"/></svg>
<span class="t" style="left:44.30px;top:255.10px;line-height:20px;letter-spacing:-0.179px;">SpringFormExample</span>
<svg class="b" style="left:7.5px;top:284px" width="7" height="10" viewBox="0 0 7 10"><path d="M1 0.8L5.4 4.8L1 8.8" stroke="#9c9c9c" stroke-width="1.5" fill="none"/></svg>
<svg class="b" style="left:24px;top:279.5px" width="16" height="14" viewBox="0 0 16 14"><path d="M0.6 12.4V6.6L1.8 5.4H5.6L6.6 6.6H10.6V8.2" fill="#fbe3a0" stroke="#d9a441" stroke-width="0.9"/><path d="M0.8 12.6L3.6 8.2H14.6L11.4 12.6Z" fill="#7fa6e8" stroke="#3a5fb8" stroke-width="1.1"/><path d="M13.4 0.2V4.2Q13.4 6 11 5.6" stroke="#2a62a8" stroke-width="1.5" fill="none"/><path d="M0.9 4.2V0.9L2.7 3L4.5 0.9V4.2" stroke="#2a62a8" stroke-width="1.5" fill="none"/><path d="M6 2.6L7.6 4" stroke="#d9a441" stroke-width="1"/></svg>
<span class="t" style="left:44.30px;top:278.10px;line-height:20px;letter-spacing:0.038px;">SpringFormValidation</span>
<svg class="b" style="left:7.5px;top:307px" width="7" height="10" viewBox="0 0 7 10"><path d="M1 0.8L5.4 4.8L1 8.8" stroke="#9c9c9c" stroke-width="1.5" fill="none"/></svg>
<svg class="b" style="left:24px;top:302.5px" width="16" height="14" viewBox="0 0 16 14"><path d="M0.6 12.4V6.6L1.8 5.4H5.6L6.6 6.6H10.6V8.2" fill="#fbe3a0" stroke="#d9a441" stroke-width="0.9"/><path d="M0.8 12.6L3.6 8.2H14.6L11.4 12.6Z" fill="#7fa6e8" stroke="#3a5fb8" stroke-width="1.1"/><path d="M13.4 0.2V4.2Q13.4 6 11 5.6" stroke="#2a62a8" stroke-width="1.5" fill="none"/><path d="M0.9 4.2V0.9L2.7 3L4.5 0.9V4.2" stroke="#2a62a8" stroke-width="1.5" fill="none"/><path d="M6 2.6L7.6 4" stroke="#d9a441" stroke-width="1"/></svg>
<span class="t" style="left:44.30px;top:301.10px;line-height:20px;letter-spacing:-0.440px;">SpringJDBCExample</span>
</div>
<div class="b" style="left:274px;top:118px;width:12px;height:434px;background:#f6f6f6;"></div>
<div class="b" style="left:313px;top:118px;width:1px;height:434px;background:#eeeeee;"></div>
<div class="b" style="left:316px;top:118px;width:946px;height:20px;background:#e8f2fe;"></div>
<div class="b" style="left:316px;top:119px;width:2px;height:19px;background:#000000;"></div>
<div class="b" style="left:1263px;top:118px;width:19px;height:434px;background:#f0f0f0;"></div>
<div class="b" style="left:1263px;top:139px;width:19px;height:198px;background:#cdcdcd;"></div>
<svg class="b" style="left:1266px;top:123px" width="13" height="11" viewBox="0 0 13 11"><path d="M2 8.6L6.5 4.2L11 8.6" stroke="#505050" stroke-width="2.2" fill="none"/></svg>
<svg class="b" style="left:1266px;top:536px" width="13" height="11" viewBox="0 0 13 11"><path d="M2 2.4L6.5 6.8L11 2.4" stroke="#505050" stroke-width="2.2" fill="none"/></svg>
<div class="b" style="left:1282px;top:118px;width:14px;height:455px;background:#f8f8f8;"></div>
<div class="b" style="left:274px;top:552px;width:40px;height:21px;background:#f8f8f8;"></div>
<div class="b" style="left:314px;top:552px;width:968px;height:21px;background:#f0f0f0;"></div>
<svg class="b" style="left:317px;top:556px" width="10" height="13" viewBox="0 0 10 13"><path d="M7.4 1.6L2.6 6.4L7.4 11.2" stroke="#bdbdbd" stroke-width="2.1" fill="none"/></svg>
<svg class="b" style="left:1246px;top:556px" width="10" height="13" viewBox="0 0 10 13"><path d="M2.6 1.6L7.4 6.4L2.6 11.2" stroke="#bdbdbd" stroke-width="2.1" fill="none"/></svg>
<div class="b ed" style="left:274px;top:118px;width:989px;height:434px;overflow:hidden">
<span class="t m ln" style="left:12px;top:0px;width:18px;">1</span>
<span class="t m ln" style="left:12px;top:20px;width:18px;">2</span>
<span class="t m cl" style="left:42px;top:20px;"><b class="k">class</b> CourseName {</span>
<span class="t m ln" style="left:12px;top:40px;width:18px;">3</span>
<span class="t m cl" style="left:42px;top:40px;">    <i class="c">//Define a private class variable</i></span>
<span class="t m ln" style="left:12px;top:60px;width:18px;">4</span>
<span class="t m cl" style="left:42px;top:60px;">    <b class="k">private</b> String <i class="f">Name</i>;</span>
<span class="t m ln" style="left:12px;top:80px;width:18px;">5</span>
<span class="t m cl" style="left:42px;top:80px;">    <i class="c">//Returns the value of the variable</i></span>
<span class="t m ln" style="left:12px;top:100px;width:18px;">6</span>
<span class="t m cl" style="left:42px;top:100px;">    <b class="k">public</b> String getName( ) {</span>
<svg class="b" style="left:30px;top:105px" width="10" height="10" viewBox="0 0 10 10"><circle cx="4.6" cy="4.6" r="4" fill="#e9edf3" stroke="#bcc6d4" stroke-width="0.9"/><path d="M2.4 4.6H6.8" stroke="#4a5a70" stroke-width="1.2"/></svg>
<span class="t m ln" style="left:12px;top:120px;width:18px;">7</span>
<span class="t m cl" style="left:42px;top:120px;">        <b class="k">return</b> <i class="f">Name</i>;</span>
<span class="t m ln" style="left:12px;top:140px;width:18px;">8</span>
<span class="t m cl" style="left:42px;top:140px;">    }</span>
<span class="t m ln" style="left:12px;top:160px;width:18px;">9</span>
<span class="t m cl" style="left:42px;top:160px;">    <i class="c">//Set the value of the variable</i></span>
<span class="t m ln" style="left:12px;top:180px;width:18px;">10</span>
<span class="t m cl" style="left:42px;top:180px;">    <b class="k">public</b> <b class="k">void</b> setName(String <i class="p">name</i>) {</span>
<svg class="b" style="left:30px;top:185px" width="10" height="10" viewBox="0 0 10 10"><circle cx="4.6" cy="4.6" r="4" fill="#e9edf3" stroke="#bcc6d4" stroke-width="0.9"/><path d="M2.4 4.6H6.8" stroke="#4a5a70" stroke-width="1.2"/></svg>
<span class="t m ln" style="left:12px;top:200px;width:18px;">11</span>
<span class="t m cl" style="left:42px;top:200px;">        <i class="f">Name</i> = <i class="p">name</i>;</span>
<span class="t m ln" style="left:12px;top:220px;width:18px;">12</span>
<span class="t m cl" style="left:42px;top:220px;">    }</span>
<span class="t m ln" style="left:12px;top:240px;width:18px;">13</span>
<span class="t m cl" style="left:42px;top:240px;">}</span>
<span class="t m ln" style="left:12px;top:260px;width:18px;">14</span>
<span class="t m cl" style="left:42px;top:260px;"><b class="k">class</b> CreditHour {</span>
<span class="t m ln" style="left:12px;top:280px;width:18px;">15</span>
<span class="t m cl" style="left:42px;top:280px;">    <i class="c">//Define a the credit hour</i></span>
<span class="t m ln" style="left:12px;top:300px;width:18px;">16</span>
<span class="t m cl" style="left:42px;top:300px;">    <b class="k">private</b> <b class="k">double</b> <i class="f">Credit_hour</i>;</span>
<span class="t m ln" style="left:12px;top:320px;width:18px;">17</span>
<span class="t m cl" style="left:42px;top:320px;">    <i class="c">//Returns the credit hour</i></span>
<span class="t m ln" style="left:12px;top:340px;width:18px;">18</span>
<span class="t m cl" style="left:42px;top:340px;">    <b class="k">public</b> <b class="k">double</b> getCH( ) {</span>
<svg class="b" style="left:30px;top:345px" width="10" height="10" viewBox="0 0 10 10"><circle cx="4.6" cy="4.6" r="4" fill="#e9edf3" stroke="#bcc6d4" stroke-width="0.9"/><path d="M2.4 4.6H6.8" stroke="#4a5a70" stroke-width="1.2"/></svg>
<span class="t m ln" style="left:12px;top:360px;width:18px;">19</span>
<span class="t m cl" style="left:42px;top:360px;">        <b class="k">return</b> <i class="f">Credit_hour</i>;</span>
<span class="t m ln" style="left:12px;top:380px;width:18px;">20</span>
<span class="t m cl" style="left:42px;top:380px;">    }</span>
<span class="t m ln" style="left:12px;top:400px;width:18px;">21</span>
<span class="t m cl" style="left:42px;top:400px;">    <i class="c">//Set the value of the variable</i></span>
<span class="t m ln" style="left:12px;top:420px;width:18px;">22</span>
<span class="t m cl" style="left:42px;top:420px;">    <b class="k">public</b> <b class="k">void</b> setCH(<b class="k">double</b> <i class="p">CH</i>) {</span>
<svg class="b" style="left:30px;top:425px" width="10" height="10" viewBox="0 0 10 10"><circle cx="4.6" cy="4.6" r="4" fill="#e9edf3" stroke="#bcc6d4" stroke-width="0.9"/><path d="M2.4 4.6H6.8" stroke="#4a5a70" stroke-width="1.2"/></svg>
</div>
<span class="t" style="left:275.70px;top:608.80px;line-height:20px;letter-spacing:0.170px;">&lt;terminated&gt;</span>
<span class="t" style="left:370.80px;top:608.80px;line-height:20px;letter-spacing:-0.536px;">Basic3</span>
<span class="t" style="left:417.70px;top:608.80px;line-height:20px;letter-spacing:-1.127px;">[Java</span>
<span class="t" style="left:454.70px;top:608.80px;line-height:20px;letter-spacing:0.202px;">Application]</span>
<span class="t" style="left:540.00px;top:608.80px;line-height:20px;letter-spacing:-0.221px;">C:\Program</span>
<span class="t" style="left:619.00px;top:608.80px;line-height:20px;letter-spacing:-0.054px;">Files\Java\jdk-17.0.5\bin\javaw.exe</span>
<span class="t" style="left:857.70px;top:608.80px;line-height:20px;letter-spacing:-0.517px;">(Aug 4, 2023,</span>
<span class="t" style="left:946.30px;top:608.80px;line-height:20px;letter-spacing:-0.416px;">10:40:39 AM</span>
<span class="t" style="left:1032.00px;top:608.80px;line-height:20px;letter-spacing:-1.400px;">–</span>
<span class="t" style="left:1044.00px;top:608.80px;line-height:20px;letter-spacing:-0.469px;">10:40:41 AM)</span>
<span class="t" style="left:1134.50px;top:608.80px;line-height:20px;letter-spacing:-0.089px;">[pid: 7192]</span>
<div class="b" style="left:274px;top:628px;width:1022px;height:1px;background:#a0a0a0;"></div>
<div class="b" style="left:274px;top:630px;width:1002px;height:123px;background:#ffffff;"></div>
<div class="b" style="left:1276px;top:630px;width:20px;height:103px;background:#f0f0f0;"></div>
<svg class="b" style="left:1279px;top:634px" width="13" height="11" viewBox="0 0 13 11"><path d="M2 8.6L6.5 4.2L11 8.6" stroke="#bdbdbd" stroke-width="2.1" fill="none"/></svg>
<svg class="b" style="left:1279px;top:716px" width="13" height="11" viewBox="0 0 13 11"><path d="M2 2.4L6.5 6.8L11 2.4" stroke="#bdbdbd" stroke-width="2.1" fill="none"/></svg>
<div class="b" style="left:274px;top:733px;width:1022px;height:20px;background:#f0f0f0;"></div>
<svg class="b" style="left:278px;top:736px" width="10" height="13" viewBox="0 0 10 13"><path d="M7.4 1.6L2.6 6.4L7.4 11.2" stroke="#bdbdbd" stroke-width="2.1" fill="none"/></svg>
<svg class="b" style="left:1260px;top:736px" width="10" height="13" viewBox="0 0 10 13"><path d="M2.6 1.6L7.4 6.4L2.6 11.2" stroke="#bdbdbd" stroke-width="2.1" fill="none"/></svg>
<span class="t m cl" style="left:276px;top:630px;">Course Name: Basic Java Programming</span>
<span class="t m cl" style="left:276px;top:650px;">Credit Hour: 1.0</span>
<svg class="b" style="left:279px;top:587px" width="16" height="16" viewBox="0 0 16 16"><g transform="scale(0.95) translate(0.4,0.6)"><rect x="1" y="1" width="12" height="9.5" rx="1.4" fill="#ffffff" stroke="#2f5fae" stroke-width="1.8"/><path d="M3.6 4.2H8.6M3.6 6.6H10" stroke="#33476e" stroke-width="1.1"/><path d="M5.5 11.4H8.5V12.4H11.5V13.6H2.5V12.4H5.5Z" fill="#2f5fae"/></g></svg>
<svg class="b" style="left:945px;top:585px" width="13" height="13" viewBox="0 0 13 13"><rect x="1.2" y="1.2" width="10.2" height="10.2" rx="1.2" fill="#a9a9a9" stroke="#cdcdcd" stroke-width="1.4"/><rect x="2.6" y="2.6" width="7.4" height="7.4" fill="#a3a3a3"/></svg>
<svg class="b" style="left:967px;top:583px" width="15" height="16" viewBox="0 0 15 16"><g transform="translate(1.4,1.6) scale(0.93)"><path d="M1.6 1.6L11.4 12.4M11.4 1.6L1.6 12.4" stroke="#747474" stroke-width="4.2" stroke-linecap="round"/></g></svg>
<svg class="b" style="left:989px;top:582px" width="18" height="18" viewBox="0 0 18 18"><g transform="translate(0.6,0.8) scale(0.78)"><path d="M1.6 1.6L11.4 12.4M11.4 1.6L1.6 12.4" stroke="#777" stroke-width="4.4" stroke-linecap="round"/><path d="M1.6 1.6L11.4 12.4M11.4 1.6L1.6 12.4" stroke="#f4f4f4" stroke-width="2" stroke-linecap="round"/></g><g transform="translate(5.6,5.6) scale(0.82)"><path d="M1.6 1.6L11.4 12.4M11.4 1.6L1.6 12.4" stroke="#747474" stroke-width="4.6" stroke-linecap="round"/></g></svg>
<div class="b" style="left:1011px;top:582px;width:1px;height:18px;background:#8a8a8a;"></div>
<svg class="b" style="left:1020px;top:582px" width="17" height="17" viewBox="0 0 17 17"><path d="M1.5 1.5H8L11 4.5V14H1.5Z" fill="#fffef4" stroke="#b7a57a" stroke-width="1"/><path d="M3.4 4.6H7.4M3.4 6.8H9M3.4 9H9M3.4 11.2H7.6" stroke="#4f74b8" stroke-width="1.1"/><path d="M9.8 9.8L15 15.4M15 9.8L9.8 15.4" stroke="#8a8a8a" stroke-width="2.2"/></svg>
<svg class="b" style="left:1043px;top:583px" width="17" height="17" viewBox="0 0 17 17"><rect x="2.4" y="1" width="12.8" height="13" fill="#eef5ff" stroke="#8ea6d4" stroke-width="1"/><rect x="10.6" y="1" width="4.6" height="13" fill="#dbe7f7" stroke="#6f8cc4" stroke-width="1"/><rect x="12.2" y="2.8" width="1.6" height="1.6" fill="#2f5fae"/><rect x="12.2" y="10.6" width="1.6" height="1.6" fill="#2f5fae"/><path d="M3.2 10.4V8.8A2 2 0 0 1 7.2 8.8V10.4" fill="none" stroke="#c9962e" stroke-width="1.3"/><rect x="1.4" y="10" width="7.6" height="5.4" rx="0.9" fill="#f0c254" stroke="#b8841c" stroke-width="1"/></svg>
<svg class="b" style="left:1066px;top:582px" width="18" height="17" viewBox="0 0 18 17"><path d="M1.5 1.5H9.5L12 4V13.5H1.5Z" fill="#fffbe8" stroke="#b49a5e" stroke-width="1"/><path d="M3.4 4.4H8.4M3.4 6.6H9.8M3.4 8.8H7M3.4 11H6.4" stroke="#5b7db8" stroke-width="1"/><path d="M14.8 3.4V9.6H10.6V7.4L6.8 10.6L10.6 13.8V11.8H16.8V3.4Z" fill="#fde9b0" stroke="#cf8f1c" stroke-width="1"/></svg>
<div class="b" style="left:1086px;top:580px;width:24px;height:21px;background:#bcd8f2;border:1px solid #8fc1f3;"></div>
<div class="b" style="left:1109px;top:580px;width:23px;height:21px;background:#bcd8f2;border:1px solid #8fc1f3;"></div>
<svg class="b" style="left:1091px;top:583px" width="16" height="16" viewBox="0 0 16 16"><rect x="4.2" y="0.8" width="10.6" height="7.8" rx="0.8" fill="#fff" stroke="#3a68b4" stroke-width="1.3"/><rect x="0.8" y="7" width="6.6" height="5" rx="0.6" fill="#fff" stroke="#3a68b4" stroke-width="1.2"/><path d="M2.2 14.2H6.6M4.4 12.2V14" stroke="#3a68b4" stroke-width="1.3"/><path d="M6.4 3.4H12.6M6.4 5.6H11.4" stroke="#5a6f9a" stroke-width="1"/></svg>
<svg class="b" style="left:1114px;top:583px" width="16" height="16" viewBox="0 0 16 16"><rect x="4.2" y="0.8" width="10.6" height="7.8" rx="0.8" fill="#fff" stroke="#3a68b4" stroke-width="1.3"/><rect x="0.8" y="7" width="6.6" height="5" rx="0.6" fill="#fff" stroke="#3a68b4" stroke-width="1.2"/><path d="M2.2 14.2H6.6M4.4 12.2V14" stroke="#3a68b4" stroke-width="1.3"/><path d="M6.2 2.4L9.6 6.6M9.6 2.4L6.2 6.6" stroke="#e02020" stroke-width="1.7"/><path d="M10.8 3.4H13.2M10.8 5.6H13.2" stroke="#5a6f9a" stroke-width="1"/></svg>
<div class="b" style="left:1134px;top:582px;width:1px;height:18px;background:#8a8a8a;"></div>
<svg class="b" style="left:1144px;top:583px" width="18" height="16" viewBox="0 0 18 16"><rect x="1" y="4.4" width="12.4" height="9.6" fill="#f4f9ff" stroke="#9a8a62" stroke-width="1"/><rect x="1" y="4.4" width="12.4" height="2.2" fill="#4a86d6"/><path d="M7.4 8.6L9.4 6.4" stroke="#333" stroke-width="1"/><path d="M8.2 4.8L11.4 1.2L15 4.4L11.6 8Z" fill="#3aa64a" stroke="#22782e" stroke-width="0.8"/></svg>
<svg class="b" style="left:1168px;top:583px" width="16" height="16" viewBox="0 0 16 16"><g transform="translate(0.4,0)"><rect x="1" y="1" width="12" height="9.5" rx="1.4" fill="#ffffff" stroke="#2f5fae" stroke-width="1.8"/><path d="M3.6 4.2H8.6M3.6 6.6H10" stroke="#33476e" stroke-width="1.1"/><path d="M5.5 11.4H8.5V12.4H11.5V13.6H2.5V12.4H5.5Z" fill="#2f5fae"/></g></svg>
<svg class="b" style="left:1191px;top:589px" width="10" height="6" viewBox="0 0 10 6"><path d="M0 0.2H9.6L4.8 5.4Z" fill="#000"/></svg>
<svg class="b" style="left:1210px;top:583px" width="16" height="16" viewBox="0 0 16 16"><rect x="0.5" y="3.5" width="13" height="11" fill="#f4f9ff" stroke="#8e7f5c"/><rect x="0.5" y="3.5" width="13" height="2.6" fill="#4a86d6" stroke="#3a6fbd" stroke-width="0.6"/><path d="M3 14C9 14 12 11 13 7" stroke="#f2d98a" stroke-width="1.6" fill="none"/></svg>
<svg class="b" style="left:1218px;top:583px" width="9" height="9" viewBox="0 0 9 9"><g transform="translate(0.2,0.2)"><path d="M4 0.4L5.2 2.8L7.6 4L5.2 5.2L4 7.6L2.8 5.2L0.4 4L2.8 2.8Z" fill="#fbe7a6" stroke="#c59a2c" stroke-width="1.1" stroke-linejoin="round"/><path d="M4 2.2V5.8M2.2 4H5.8" stroke="#ffffff" stroke-width="1.2"/></g></svg>
<svg class="b" style="left:1233px;top:589px" width="10" height="6" viewBox="0 0 10 6"><path d="M0 0.2H9.6L4.8 5.4Z" fill="#000"/></svg>
<div class="b" style="left:1301px;top:90px;width:2px;height:2px;background:#a89c88;"></div>
<div class="b" style="left:1305px;top:90px;width:2px;height:2px;background:#a89c88;"></div>
<div class="b" style="left:1309px;top:90px;width:2px;height:2px;background:#a89c88;"></div>
<svg class="b" style="left:1304px;top:100px" width="9" height="8" viewBox="0 0 9 8"><rect x="2.6" y="0.6" width="5" height="3.6" fill="#fff" stroke="#8d8273" stroke-width="1.1"/><rect x="0.6" y="3" width="5" height="3.8" fill="#fff" stroke="#8d8273" stroke-width="1.1"/></svg>
<svg class="b" style="left:1302px;top:118px" width="12" height="16" viewBox="0 0 12 16"><path d="M1.6 1H11.5V12Q9.6 11.4 8 12.6Q5.6 14.8 1.6 13.4Z" fill="#e6e6fa" stroke="#5a5a66" stroke-width="1.2"/><path d="M3.6 3.6H11M3.6 5.6H11M3.6 7.6H11M3.6 9.6H11" stroke="#33333a" stroke-width="0.9"/><path d="M2.4 11.6Q5 13.6 8 11.6" stroke="#a9a9dc" stroke-width="1.4" fill="none"/></svg>
<div class="b" style="left:1301px;top:139px;width:2px;height:2px;background:#a89c88;"></div>
<div class="b" style="left:1305px;top:139px;width:2px;height:2px;background:#a89c88;"></div>
<div class="b" style="left:1309px;top:139px;width:2px;height:2px;background:#a89c88;"></div>
<svg class="b" style="left:1304px;top:149px" width="9" height="8" viewBox="0 0 9 8"><rect x="2.6" y="0.6" width="5" height="3.6" fill="#fff" stroke="#8d8273" stroke-width="1.1"/><rect x="0.6" y="3" width="5" height="3.8" fill="#fff" stroke="#8d8273" stroke-width="1.1"/></svg>
<svg class="b" style="left:1300px;top:167px" width="14" height="16" viewBox="0 0 14 16"><rect x="1.4" y="1.2" width="5" height="5" fill="#d9ecfb" stroke="#2f7fd0" stroke-width="1.3"/><rect x="1.4" y="9.6" width="5" height="5" fill="#d9ecfb" stroke="#2f7fd0" stroke-width="1.3"/><path d="M6.8 4H13M6.8 12H13" stroke="#2f7fd0" stroke-width="1"/><rect x="8.6" y="6.8" width="2.6" height="2.6" fill="#fff" stroke="#2f7fd0" stroke-width="0.9"/><path d="M11.6 8H13" stroke="#2f7fd0" stroke-width="1"/></svg>
<div class="b" style="left:1301px;top:188px;width:2px;height:2px;background:#a89c88;"></div>
<div class="b" style="left:1305px;top:188px;width:2px;height:2px;background:#a89c88;"></div>
<div class="b" style="left:1309px;top:188px;width:2px;height:2px;background:#a89c88;"></div>
<svg class="b" style="left:1304px;top:198px" width="9" height="8" viewBox="0 0 9 8"><rect x="2.6" y="0.6" width="5" height="3.6" fill="#fff" stroke="#8d8273" stroke-width="1.1"/><rect x="0.6" y="3" width="5" height="3.8" fill="#fff" stroke="#8d8273" stroke-width="1.1"/></svg>
<span class="t" style="left:1302px;top:214.5px;font-family:'Liberation Serif',serif;font-size:14px;line-height:18px;font-weight:bold;font-style:italic;color:#2f7fc8;">@</span>
<svg class="b" style="left:1300px;top:237px" width="14" height="16" viewBox="0 0 14 16"><path d="M1 1H8.4L11.4 4V14H1Z" fill="#fdfbf0" stroke="#b58a3a" stroke-width="1.2"/><path d="M4.6 4.6Q3.4 4.6 3.4 5.8V6.6Q3.4 7.4 2.6 7.4Q3.4 7.4 3.4 8.2V9Q3.4 10.2 4.6 10.2" stroke="#2f6fc0" stroke-width="1" fill="none"/><path d="M5.6 6.4H8.4M5.6 8.4H8.4" stroke="#2f6fc0" stroke-width="1"/><path d="M6.4 11H10.6V9.4L13.8 12L10.6 14.6V13H6.4Z" fill="#f8c84a" stroke="#c8901c" stroke-width="0.7"/></svg>
<svg class="b" style="left:1300px;top:260px" width="14" height="17" viewBox="0 0 14 17"><rect x="5.6" y="1" width="9" height="7.6" rx="0.8" fill="#fff" stroke="#5a6a7a" stroke-width="1"/><rect x="7.4" y="3" width="7" height="3.6" fill="#1f5fe0"/><path d="M1 13L5 8.4L9 11.6L5.4 16Z" fill="#f4f4f4" stroke="#333" stroke-width="0.9"/><path d="M4.6 9L8.4 12" stroke="#e8d84a" stroke-width="1.2"/><path d="M2 14.4L4.6 16.2" stroke="#222" stroke-width="1.4"/></svg>
<div class="b" style="left:1313px;top:0px;width:1px;height:776px;background:#b6b6b6;"></div>
<div class="b" style="left:935px;top:760px;width:2px;height:2px;background:#b5aa96;box-shadow:1px 1px 0 rgba(255,255,255,0.8);"></div>
<div class="b" style="left:935px;top:764px;width:2px;height:2px;background:#b5aa96;box-shadow:1px 1px 0 rgba(255,255,255,0.8);"></div>
<div class="b" style="left:935px;top:768px;width:2px;height:2px;background:#b5aa96;box-shadow:1px 1px 0 rgba(255,255,255,0.8);"></div>
<div class="b" style="left:935px;top:772px;width:2px;height:2px;background:#b5aa96;box-shadow:1px 1px 0 rgba(255,255,255,0.8);"></div>
<div class="b" style="left:1293px;top:760px;width:2px;height:2px;background:#b5aa96;box-shadow:1px 1px 0 rgba(255,255,255,0.8);"></div>
<div class="b" style="left:1293px;top:764px;width:2px;height:2px;background:#b5aa96;box-shadow:1px 1px 0 rgba(255,255,255,0.8);"></div>
<div class="b" style="left:1293px;top:768px;width:2px;height:2px;background:#b5aa96;box-shadow:1px 1px 0 rgba(255,255,255,0.8);"></div>
<div class="b" style="left:1293px;top:772px;width:2px;height:2px;background:#b5aa96;box-shadow:1px 1px 0 rgba(255,255,255,0.8);"></div>
<svg class="b" style="left:1303px;top:759px" width="11" height="17" viewBox="0 0 11 17"><defs><radialGradient id="bg" cx="50%" cy="45%" r="60%"><stop offset="0" stop-color="#fffef0"/><stop offset="0.7" stop-color="#fdf0a8"/><stop offset="1" stop-color="#f8d860"/></radialGradient></defs><path d="M5.4 1A4.4 4.4 0 0 0 2.4 8.6Q3.4 9.8 3.4 11.2H7.4Q7.4 9.8 8.4 8.6A4.4 4.4 0 0 0 5.4 1Z" fill="url(#bg)" stroke="#f0a81c" stroke-width="1.3"/><rect x="3.2" y="11.4" width="4.4" height="3.6" rx="0.6" fill="#7f95ae" stroke="#3f5876" stroke-width="0.8"/><rect x="4.2" y="12.2" width="2.4" height="1" fill="#e6eef8"/></svg>
</body></html>
